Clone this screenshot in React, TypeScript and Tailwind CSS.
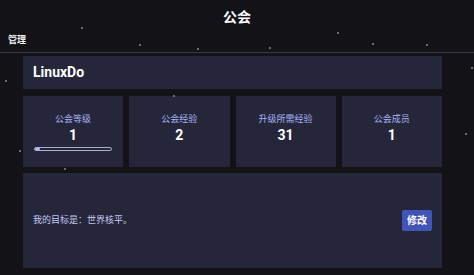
const stars = [
  "left-[81px] top-[27px]",
  "left-[139px] top-[44px]",
  "left-[197px] top-[48px]",
  "left-[269px] top-[47px]",
  "left-[337px] top-[32px]",
  "left-[372px] top-[43px]",
  "left-[426px] top-[44px]",
  "left-[5px] top-[80px]",
  "left-[471px] top-[67px]",
  "left-[173px] top-[95px]",
  "left-[19px] top-[150px]",
  "left-[465px] top-[133px]",
  "left-[64px] top-[168px]",
];

const stats = [
  { label: "公会等级", value: "1", bar: true },
  { label: "公会经验", value: "2" },
  { label: "升级所需经验", value: "31" },
  { label: "公会成员", value: "1" },
];

const App = () => {
  return (
    <div className="relative h-[275px] w-[474px] overflow-hidden bg-[#121217] font-['Roboto','Noto_Sans_CJK_SC',sans-serif]">
      <div className="flex h-[34px] items-center justify-center text-[14px] font-bold text-white">
        公会
      </div>
      <div className="h-[18px] pl-[8px] text-[9px] leading-[12px] font-bold text-gray-100">
        管理
      </div>
      <div className="h-px bg-[#3a3a4a]" />
      <div className="mt-[3px] ml-[23px] flex w-[419px] flex-col gap-[6px]">
        <div className="flex h-[33px] items-center bg-[#26263b] px-[10px] text-[14px] font-bold text-white">
          LinuxDo
        </div>
        <div className="mt-px grid grid-cols-4 gap-[6px]">
          {stats.map((s) => (
            <div
              key={s.label}
              className="flex h-[71px] flex-col items-center bg-[#26263b] pt-[17px]"
            >
              <div className="text-[9px] leading-[12px] text-[#a6b3f5]">
                {s.label}
              </div>
              <div className="mt-[2px] text-[14px] leading-[16px] font-bold text-white">
                {s.value}
              </div>
              {s.bar && (
                <div className="mt-[4px] h-[4px] w-[78px] rounded-full border border-[#a9abd0]">
                  <div className="h-full w-[5px] rounded-full bg-[#b8bff5]" />
                </div>
              )}
            </div>
          ))}
        </div>
        <div className="flex h-[95px] items-center justify-between bg-[#26263b] px-[10px]">
          <span className="text-[9px] text-[#c3c8f0]">我的目标是：世界核平。</span>
          <button className="rounded-[2px] bg-[#4354b8] px-[5px] py-[3px] text-[10px] font-bold text-white">
            修改
          </button>
        </div>
      </div>
      {stars.map((c) => (
        <span
          key={c}
          className={`absolute h-[2px] w-[2px] rounded-full bg-[#8d8d99] ${c}`}
        />
      ))}
    </div>
  );
};

export default App;
